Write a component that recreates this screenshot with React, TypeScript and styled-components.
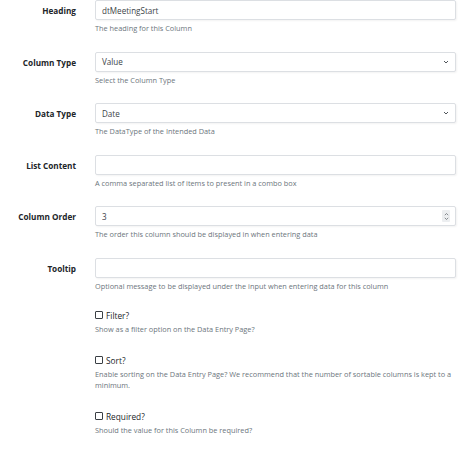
import React from "react";
import styled, { createGlobalStyle } from "styled-components";

const Global = createGlobalStyle`
  html, body { margin: 0; padding: 0; background: #ffffff; }
  body { font-family: "Open Sans", "Noto Sans", sans-serif; color: #212529; }
  * { box-sizing: border-box; }
`;

const Form = styled.div`
  display: grid;
  grid-template-columns: 76px 361px;
  column-gap: 19px;
  padding: 0 18px 0 0;
  width: 474px;
`;

const Label = styled.div`
  font-size: 8.2px;
  font-weight: 700;
  text-align: right;
  color: #212529;
  height: 20px;
  line-height: 21px;
  white-space: nowrap;
`;

const Group = styled.div<{ $last?: number }>`
  display: flex;
  flex-direction: column;
  gap: 3px;
  margin-bottom: ${(p) => (p.$last ? p.$last : 17.5)}px;
`;

const Box = styled.div`
  display: flex;
  align-items: center;
  height: 20px;
  border: 1px solid #dcdfe3;
  border-radius: 2px;
  background: #ffffff;
  box-shadow: 1px 1px 2px rgba(0, 0, 0, 0.05);
  padding: 0 6px;
`;

const TextInput = styled.input`
  flex: 1;
  min-width: 0;
  border: none;
  outline: none;
  padding: 0;
  background: transparent;
  font-family: "Open Sans", "Noto Sans", sans-serif;
  font-size: 8.1px;
  color: #3d4348;
`;

const SelectText = styled.span`
  flex: 1;
  font-size: 8.1px;
  color: #3d4348;
`;

const Help = styled.div`
  font-size: 7.35px;
  line-height: 11px;
  color: #6c757d;
`;

const Spinner = styled.div`
  display: flex;
  flex-direction: column;
  align-items: center;
  justify-content: center;
  width: 8px;
  height: 12px;
  background: #eceef0;
  border-radius: 1px;
  margin-right: -1px;
`;

const CheckRow = styled.label`
  display: flex;
  align-items: center;
  gap: 3px;
  height: 12px;
  font-size: 8.3px;
  color: #212529;
`;

const Check = styled.input`
  appearance: none;
  margin: 0;
  width: 8px;
  height: 8px;
  border: 1px solid #3a3f44;
  border-radius: 1px;
  background: #fff;
`;

const Spacer = styled.div``;

const Chevron = () => (
  <svg width="6" height="4" viewBox="0 0 6 4">
    <path d="M1 1 L3 3 L5 1" fill="none" stroke="#50555a" strokeWidth="1" />
  </svg>
);

const SpinArrows = () => (
  <svg width="5" height="9" viewBox="0 0 5 9">
    <path d="M0.8 3.2 L2.5 1.5 L4.2 3.2" fill="none" stroke="#6b7075" strokeWidth="0.8" />
    <path d="M0.8 5.8 L2.5 7.5 L4.2 5.8" fill="none" stroke="#6b7075" strokeWidth="0.8" />
  </svg>
);

type FieldProps = { label: string; help: string; children: React.ReactNode };

const Field = ({ label, help, children }: FieldProps) => (
  <>
    <Label>{label}</Label>
    <Group>
      {children}
      <Help>{help}</Help>
    </Group>
  </>
);

type CheckProps = { label: string; help: React.ReactNode };

const CheckField = ({ label, help }: CheckProps) => (
  <>
    <Spacer />
    <Group $last={19}>
      <CheckRow>
        <Check type="checkbox" />
        {label}
      </CheckRow>
      <Help>{help}</Help>
    </Group>
  </>
);

export default function App() {
  return (
    <>
      <Global />
      <Form>
        <Field label="Heading" help="The heading for this Column">
          <Box>
            <TextInput defaultValue="dtMeetingStart" />
          </Box>
        </Field>
        <Field label="Column Type" help="Select the Column Type">
          <Box>
            <SelectText>Value</SelectText>
            <Chevron />
          </Box>
        </Field>
        <Field label="Data Type" help="The DataType of the Intended Data">
          <Box>
            <SelectText>Date</SelectText>
            <Chevron />
          </Box>
        </Field>
        <Field label="List Content" help="A comma separated list of items to present in a combo box">
          <Box>
            <TextInput defaultValue="" />
          </Box>
        </Field>
        <Field label="Column Order" help="The order this column should be displayed in when entering data">
          <Box>
            <TextInput defaultValue="3" />
            <Spinner>
              <SpinArrows />
            </Spinner>
          </Box>
        </Field>
        <Field
          label="Tooltip"
          help="Optional message to be displayed under the input when entering data for this column"
        >
          <Box>
            <TextInput defaultValue="" />
          </Box>
        </Field>
        <CheckField label="Filter?" help="Show as a filter option on the Data Entry Page?" />
        <CheckField
          label="Sort?"
          help="Enable sorting on the Data Entry Page? We recommend that the number of sortable columns is kept to a minimum."
        />
        <CheckField label="Required?" help="Should the value for this Column be required?" />
      </Form>
    </>
  );
}
